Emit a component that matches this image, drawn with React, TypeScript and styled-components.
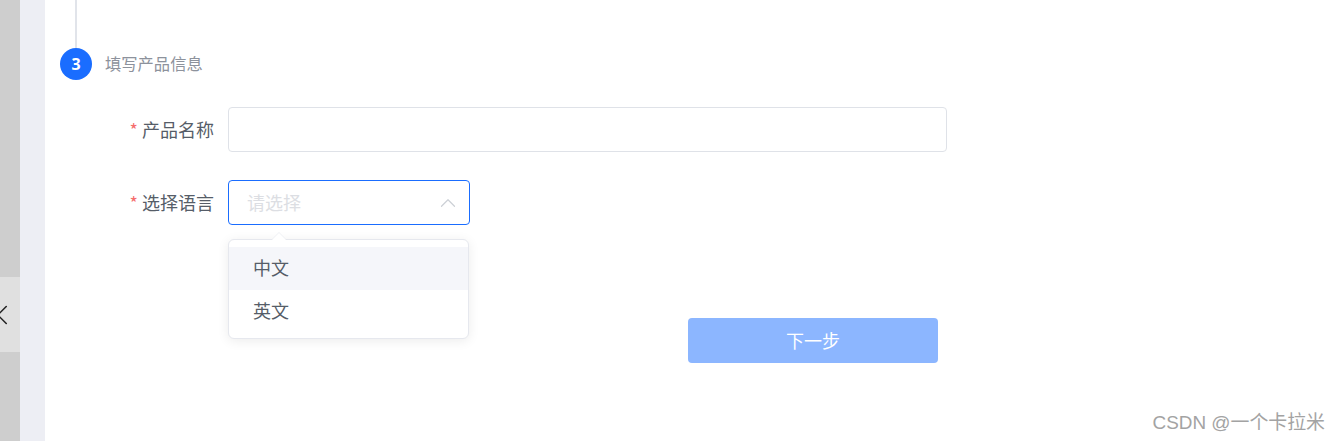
import styled, { createGlobalStyle } from "styled-components";
import { ChevronLeft, ChevronUp } from "lucide-react";

const GlobalStyle = createGlobalStyle`
  html, body {
    margin: 0;
    padding: 0;
    height: 100%;
    background: #fff;
    overflow: hidden;
  }
  body {
    font-family: "Noto Sans CJK SC", "Liberation Sans", sans-serif;
  }
`;

const Page = styled.div`
  display: flex;
  position: relative;
  width: 1340px;
  height: 441px;
  overflow: hidden;
`;

const Rail = styled.div`
  position: relative;
  flex: 0 0 20px;
  background: #cecece;
`;

const RailHandle = styled.div`
  position: absolute;
  left: 0;
  top: 277px;
  width: 20px;
  height: 75px;
  background: #e0e0e0;
  overflow: hidden;
  color: #222;

  svg {
    position: absolute;
    left: -15px;
    top: 21px;
  }
`;

const Gutter = styled.div`
  flex: 0 0 25px;
  background: #edeef4;
`;

const Main = styled.main`
  flex: 1;
  padding-left: 15px;
  background: #fff;
`;

const Connector = styled.div`
  width: 2px;
  height: 48px;
  margin-left: 15px;
  background: #e1e4ea;
`;

const StepRow = styled.div`
  display: flex;
  align-items: center;
  gap: 13px;
  height: 32px;
`;

const StepBadge = styled.div`
  display: flex;
  align-items: center;
  justify-content: center;
  width: 32px;
  height: 32px;
  border-radius: 50%;
  background: #1a6dff;
  color: #fff;
  font-family: "Open Sans", sans-serif;
  font-size: 16px;
  font-weight: 700;
`;

const StepTitle = styled.span`
  padding-bottom: 2px;
  font-size: 16.3px;
  color: #8d929c;
`;

const Form = styled.div`
  display: flex;
  flex-direction: column;
  gap: 28px;
  margin-top: 27px;
`;

const FormRow = styled.div`
  display: flex;
  align-items: center;
  height: 45px;
`;

const Label = styled.label`
  flex: 0 0 168px;
  padding: 0 14px 2px 0;
  box-sizing: border-box;
  text-align: right;
  font-size: 18px;
  color: #565d68;
`;

const Star = styled.span`
  color: #f56c6c;
  margin-right: 4px;
  font-size: 18px;
`;

const TextInput = styled.input`
  width: 719px;
  height: 45px;
  box-sizing: border-box;
  border: 1px solid #dfe2e8;
  border-radius: 4px;
  outline: none;
  background: #fff;
`;

const SelectWrap = styled.div`
  position: relative;
  width: 242px;
`;

const SelectBox = styled.div`
  display: flex;
  align-items: center;
  justify-content: space-between;
  height: 45px;
  box-sizing: border-box;
  padding: 0 8px 2px 18px;
  border: 1px solid #1a6dff;
  border-radius: 4px;
  font-size: 18px;
  color: #dcdee3;

  svg {
    color: #ccd0d6;
    margin-top: 2px;
  }
`;

const Dropdown = styled.div`
  position: absolute;
  top: 59px;
  left: 0;
  width: 241px;
  height: 100px;
  box-sizing: border-box;
  padding: 7px 0 6px;
  background: #fff;
  border: 1px solid #e6e8ee;
  border-radius: 6px;
  box-shadow: 0 2px 12px rgba(0, 0, 0, 0.08);

  &::before {
    content: "";
    position: absolute;
    top: -7px;
    left: 43px;
    border-left: 7px solid transparent;
    border-right: 7px solid transparent;
    border-bottom: 7px solid #fff;
    filter: drop-shadow(0 -1px 0 #eef0f4);
  }
`;

const Option = styled.div<{ $active?: boolean }>`
  height: 43px;
  line-height: 41px;
  padding-left: 24px;
  font-size: 18px;
  color: #565d68;
  background: ${(p) => (p.$active ? "#f5f6fa" : "#fff")};
`;

const Actions = styled.div`
  display: flex;
  margin: 93px 0 0 628px;
`;

const NextButton = styled.button`
  width: 250px;
  height: 45px;
  padding: 0 0 2px;
  border: none;
  border-radius: 4px;
  background: #8cb6ff;
  color: #fff;
  font-family: inherit;
  font-size: 18px;
`;

const Watermark = styled.div`
  position: absolute;
  right: 15px;
  bottom: 7px;
  font-family: "Liberation Sans", "Noto Sans CJK SC", sans-serif;
  font-size: 18.9px;
  color: #a3a3a3;
`;

const App = () => {
  return (
    <Page>
      <GlobalStyle />
      <Rail>
        <RailHandle>
          <ChevronLeft size={34} strokeWidth={1.1} />
        </RailHandle>
      </Rail>
      <Gutter />
      <Main>
        <Connector />
        <StepRow>
          <StepBadge>3</StepBadge>
          <StepTitle>填写产品信息</StepTitle>
        </StepRow>
        <Form>
          <FormRow>
            <Label>
              <Star>*</Star>产品名称
            </Label>
            <TextInput />
          </FormRow>
          <FormRow>
            <Label>
              <Star>*</Star>选择语言
            </Label>
            <SelectWrap>
              <SelectBox>
                请选择
                <ChevronUp size={26} strokeWidth={1.1} />
              </SelectBox>
              <Dropdown>
                <Option $active>中文</Option>
                <Option>英文</Option>
              </Dropdown>
            </SelectWrap>
          </FormRow>
        </Form>
        <Actions>
          <NextButton>下一步</NextButton>
        </Actions>
      </Main>
      <Watermark>CSDN @一个卡拉米</Watermark>
    </Page>
  );
};

export default App;
